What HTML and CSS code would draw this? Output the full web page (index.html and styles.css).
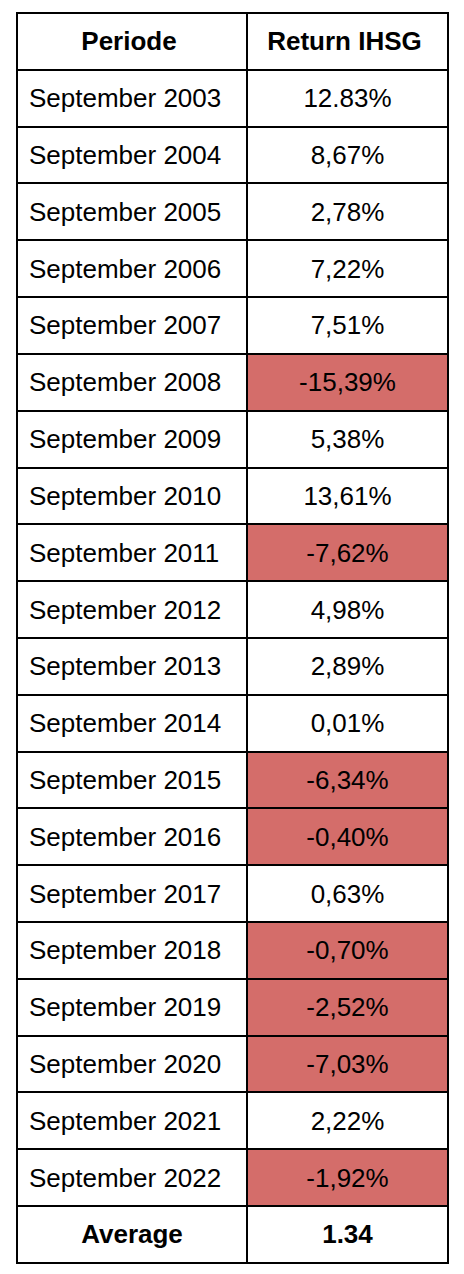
FILE: index.html
```html
<!DOCTYPE html>
<html lang="id">
<head>
<meta charset="utf-8">
<title>Return IHSG September</title>
<link rel="stylesheet" href="styles.css">
</head>
<body>
<table class="ret">
  <colgroup><col class="c1"><col class="c2"></colgroup>
  <thead>
    <tr><th>Periode</th><th>Return IHSG</th></tr>
  </thead>
  <tbody>
    <tr><td>September 2003</td><td class="num">12.83%</td></tr>
    <tr><td>September 2004</td><td class="num">8,67%</td></tr>
    <tr><td>September 2005</td><td class="num">2,78%</td></tr>
    <tr><td>September 2006</td><td class="num">7,22%</td></tr>
    <tr><td>September 2007</td><td class="num">7,51%</td></tr>
    <tr><td>September 2008</td><td class="num neg">-15,39%</td></tr>
    <tr><td>September 2009</td><td class="num">5,38%</td></tr>
    <tr><td>September 2010</td><td class="num">13,61%</td></tr>
    <tr><td>September 2011</td><td class="num neg">-7,62%</td></tr>
    <tr><td>September 2012</td><td class="num">4,98%</td></tr>
    <tr><td>September 2013</td><td class="num">2,89%</td></tr>
    <tr><td>September 2014</td><td class="num">0,01%</td></tr>
    <tr><td>September 2015</td><td class="num neg">-6,34%</td></tr>
    <tr><td>September 2016</td><td class="num neg">-0,40%</td></tr>
    <tr><td>September 2017</td><td class="num">0,63%</td></tr>
    <tr><td>September 2018</td><td class="num neg">-0,70%</td></tr>
    <tr><td>September 2019</td><td class="num neg">-2,52%</td></tr>
    <tr><td>September 2020</td><td class="num neg">-7,03%</td></tr>
    <tr><td>September 2021</td><td class="num">2,22%</td></tr>
    <tr><td>September 2022</td><td class="num neg">-1,92%</td></tr>
  </tbody>
  <tfoot>
    <tr><th>Average</th><th class="avg">1.34</th></tr>
  </tfoot>
</table>
</body>
</html>
```

FILE: styles.css
```css
html, body {
  margin: 0;
  padding: 0;
  background: #ffffff;
}

body {
  font-family: "Liberation Sans", Arial, sans-serif;
  color: #000000;
}

.ret {
  margin: 12px 0 0 16px;
  width: 433px;
  table-layout: fixed;
  border-collapse: separate;
  border-spacing: 0;
  border-left: 2px solid #000;
  border-top: 2px solid #000;
  font-size: 26px;
  line-height: 30px;
}

.ret .c1 { width: 230px; }
.ret .c2 { width: 201px; }

.ret tr {
  height: 56.82px;
}

.ret th,
.ret td {
  box-sizing: border-box;
  padding: 0;
  border-right: 2px solid #000;
  border-bottom: 2px solid #000;
  vertical-align: middle;
  white-space: nowrap;
}

.ret td {
  text-align: left;
  padding-left: 11px;
  font-weight: normal;
}

.ret th {
  text-align: center;
  font-weight: bold;
}

.ret thead th {
  padding-right: 6px;
}

.ret td.num {
  text-align: center;
  padding-left: 0;
}

.ret td.neg {
  background: #d46d6a;
}
```
